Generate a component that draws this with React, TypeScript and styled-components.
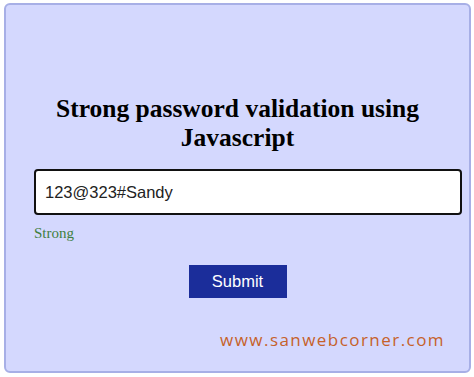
import styled, { createGlobalStyle } from 'styled-components';

const Global = createGlobalStyle`
  html, body {
    margin: 0;
    padding: 0;
    background: #ffffff;
  }
`;

const Panel = styled.div`
  box-sizing: border-box;
  margin: 3px 3px 4px 4px;
  height: 370px;
  background: #d4d8fe;
  border: 2px solid #a7afe6;
  border-radius: 6px;
  display: flex;
  flex-direction: column;
  padding: 89px 0 0 0;
`;

const Title = styled.h1`
  margin: 0;
  font-family: 'Liberation Serif', 'Times New Roman', serif;
  font-weight: 700;
  font-size: 25.5px;
  line-height: 29px;
  color: #000;
  text-align: center;
`;

const Field = styled.input`
  box-sizing: border-box;
  margin: 17px 0 0 28px;
  width: 428px;
  height: 46px;
  padding: 0 9px;
  border: 2px solid #111;
  border-radius: 4px;
  background: #fff;
  font-family: 'Liberation Sans', Arial, sans-serif;
  font-size: 16.5px;
  color: #222;
  outline: none;
`;

const Strength = styled.div<{ $tone: string }>`
  margin: 9px 0 0 28px;
  font-family: 'Liberation Serif', 'Times New Roman', serif;
  font-size: 15px;
  line-height: 18px;
  color: ${p => p.$tone};
`;

const Actions = styled.div`
  display: flex;
  justify-content: center;
  margin-top: 23px;
`;

const SubmitButton = styled.button`
  width: 98px;
  height: 33px;
  border: none;
  background: #1b2d9a;
  color: #fff;
  font-family: 'Liberation Sans', Arial, sans-serif;
  font-size: 16.5px;
  cursor: pointer;
`;

const Watermark = styled.div`
  margin: 30px 24px 0 0;
  text-align: right;
  font-family: 'Open Sans', 'DejaVu Sans', sans-serif;
  font-size: 17px;
  letter-spacing: 1.45px;
  color: #c6612a;
`;

export default function App() {
  return (
    <>
      <Global />
      <Panel>
        <Title>
          Strong password validation using
          <br />
          Javascript
        </Title>
        <Field type="text" defaultValue="123@323#Sandy" autoFocus />
        <Strength $tone="#3f7f3f">Strong</Strength>
        <Actions>
          <SubmitButton>Submit</SubmitButton>
        </Actions>
        <Watermark>www.sanwebcorner.com</Watermark>
      </Panel>
    </>
  );
}
